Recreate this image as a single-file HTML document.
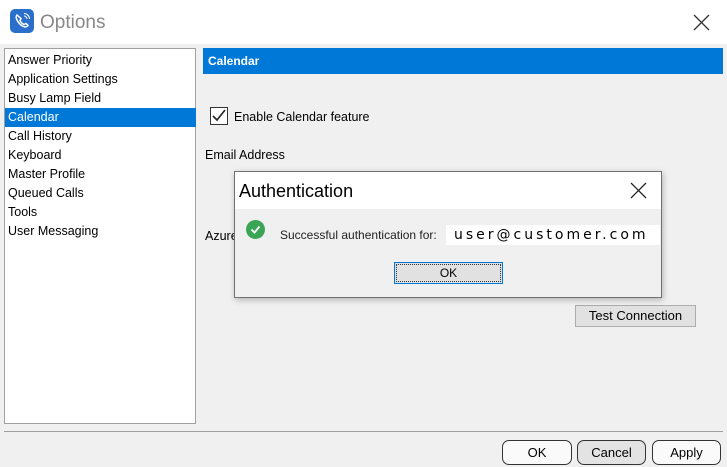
<!DOCTYPE html><html><head><style>
body{margin:0;width:727px;height:467px;background:#f0f0f0;font-family:"Liberation Sans",sans-serif;font-size:12px;color:#000;position:relative;overflow:hidden}
.a{position:absolute}
.li{position:absolute;left:3px;width:188px;height:19px;line-height:19px;padding-left:3px;font-size:12.5px}
.btn{position:absolute;box-sizing:border-box;text-align:center;font-size:13px}
</style></head><body>
<div class="a" style="left:0;top:0;width:727px;height:44px;background:#fff"></div>
<div class="a" style="left:10px;top:9px;width:24px;height:24px;background:#2a6fc9;border-radius:5px">
<svg width="24" height="24" viewBox="0 0 24 24"><path d="M7 6c-1 1-1.5 2 0 5s4 5.5 6.5 6.5 3.5 0 4.5-1l-2-2-2 1c-1.5-.5-3.5-2.5-4-4l1-2z" fill="none" stroke="#fff" stroke-width="1.5"/><path d="M14 7a3 3 0 0 1 3 3M14 4.5a5.5 5.5 0 0 1 5.5 5.5" fill="none" stroke="#fff" stroke-width="1"/></svg></div>
<div class="a" style="left:40px;top:12px;font-size:19px;color:#888">Options</div>
<svg class="a" style="left:693px;top:14px" width="17" height="17"><path d="M1 1L16 16M16 1L1 16" stroke="#333" stroke-width="1.3"/></svg>
<div class="a" style="left:4px;top:48px;width:190px;height:374px;background:#fff;border:1px solid #a0a0a0"></div>
<div class="li" style="top:51px;left:5px">Answer Priority</div>
<div class="li" style="top:70px;left:5px">Application Settings</div>
<div class="li" style="top:89px;left:5px">Busy Lamp Field</div>
<div class="li" style="top:108px;left:5px;background:#0078d7;color:#fff">Calendar</div>
<div class="li" style="top:127px;left:5px">Call History</div>
<div class="li" style="top:146px;left:5px">Keyboard</div>
<div class="li" style="top:165px;left:5px">Master Profile</div>
<div class="li" style="top:184px;left:5px">Queued Calls</div>
<div class="li" style="top:203px;left:5px">Tools</div>
<div class="li" style="top:222px;left:5px">User Messaging</div>
<div class="a" style="left:203px;top:48px;width:520px;height:26px;background:#0078d7;color:#fff;font-weight:bold;line-height:26px;padding-left:5px;box-sizing:border-box">Calendar</div>
<div class="a" style="left:210px;top:107px;width:18px;height:18px;background:#fff;border:1px solid #333;box-sizing:border-box"><svg width="16" height="16"><path d="M2 8l4 4 8-10" fill="none" stroke="#222" stroke-width="1.6"/></svg></div>
<div class="a" style="left:234px;top:110px;font-size:12.5px">Enable Calendar feature</div>
<div class="a" style="left:205px;top:148px;font-size:12.5px">Email Address</div>
<div class="a" style="left:205px;top:229px;font-size:12.5px">Azure</div>
<div class="btn" style="left:575px;top:305px;width:121px;height:22px;border:1px solid #adadad;background:#e1e1e1;line-height:20px">Test Connection</div>
<div class="a" style="left:4px;top:431px;width:719px;height:1px;background:#a0a0a0"></div>
<div class="btn" style="left:502px;top:440px;width:70px;height:25px;border:1px solid #333;border-radius:7px;background:#fafafa;line-height:23px">OK</div>
<div class="btn" style="left:577px;top:440px;width:69px;height:25px;border:1px solid #333;border-radius:7px;background:#e3e3e3;line-height:23px">Cancel</div>
<div class="btn" style="left:652px;top:440px;width:69px;height:25px;border:1px solid #333;border-radius:7px;background:#fafafa;line-height:23px">Apply</div>
<div class="a" style="left:234px;top:171px;width:428px;height:127px;background:#f0f0f0;border:1px solid #707070;box-sizing:border-box;box-shadow:1px 2px 6px rgba(0,0,0,.25)">
<div class="a" style="left:0;top:0;width:426px;height:37px;background:#fff"></div>
<div class="a" style="left:4px;top:9px;font-size:18px">Authentication</div>
<svg class="a" style="left:395px;top:10px" width="17" height="17"><path d="M1 1L16 16M16 1L1 16" stroke="#222" stroke-width="1.3"/></svg>
<div class="a" style="left:11px;top:48px;width:19px;height:19px;border-radius:50%;background:#3aa655"><svg width="19" height="19"><path d="M5.5 9.5l3 3 5-6" fill="none" stroke="#fff" stroke-width="1.8"/></svg></div>
<div class="a" style="left:45px;top:56px;font-size:12px;color:#222">Successful authentication for:</div>
<div class="a" style="left:211px;top:53px;width:214px;height:20px;background:#fff;font-family:'DejaVu Sans',sans-serif;font-size:14px;letter-spacing:3px;line-height:20px;padding-left:8px;box-sizing:border-box;white-space:nowrap;overflow:hidden">user@customer.com</div>
<div class="btn" style="left:159px;top:90px;width:109px;height:22px;border:1px solid #0078d7;background:#e1e1e1;line-height:20px;font-size:12px"><div style="position:absolute;inset:1px;border:1px dotted #333"></div>OK</div>
</div>
</body></html>
